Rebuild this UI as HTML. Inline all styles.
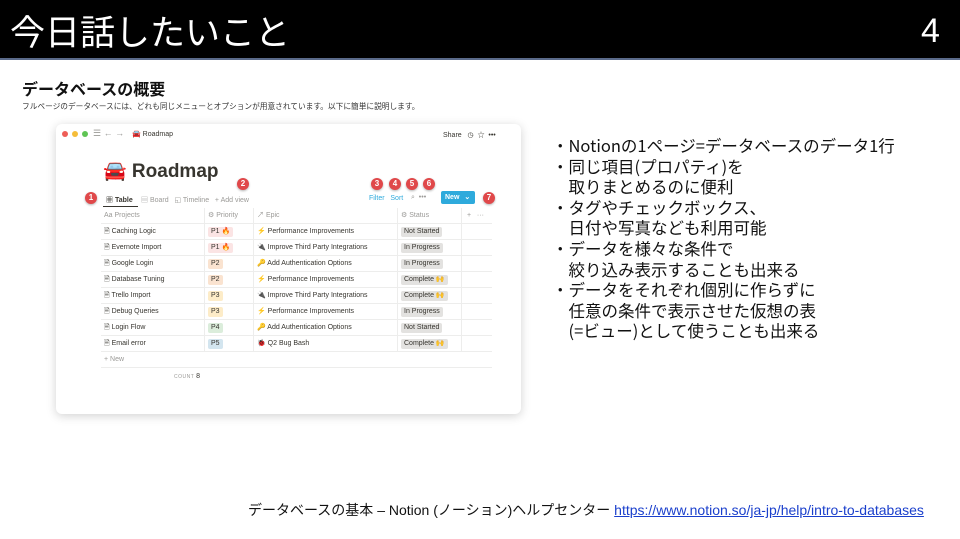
<!DOCTYPE html>
<html><head><meta charset="utf-8"><style>
*{margin:0;padding:0;box-sizing:border-box}
body{width:960px;height:539px;background:#fff;position:relative;overflow:hidden;font-family:"Liberation Sans","Noto Sans CJK JP",sans-serif}
.abs{position:absolute;white-space:nowrap}
.hdr{position:absolute;left:0;top:0;width:960px;height:58px;background:#000}
.hl{position:absolute;left:0;top:58px;width:960px;height:2px;background:#5a6a8a}
.win{position:absolute;left:56px;top:124px;width:465px;height:290px;background:#fff;border-radius:6px;box-shadow:0 2px 10px rgba(0,0,0,.18)}
.t{font-size:7px;color:#37352f}
.g{color:#9b9a97}
.dot{position:absolute;width:6px;height:6px;border-radius:50%}
.num{position:absolute;width:12px;height:12px;border-radius:50%;background:#e0484a;color:#fff;font-size:8px;font-weight:bold;text-align:center;line-height:12px;box-shadow:0 1px 2px rgba(0,0,0,.3)}
.row{position:absolute;left:101px;width:391px;height:16px;border-bottom:1px solid #ededec;font-size:7px;color:#37352f}
.row>span{position:absolute;top:3px;white-space:nowrap;line-height:10px}
.tag{display:inline-block;padding:0 3px;border-radius:2px;line-height:10px}
.vl{position:absolute;top:208px;height:144px;width:1px;background:#ededec}
.bl{font-size:16.5px;color:#111;line-height:20.6px;font-family:"Noto Sans CJK JP","Liberation Sans",sans-serif}
</style></head><body>
<div class="hdr"></div><div class="hl"></div>
<div class="abs" style="left:10px;top:8px;font-size:35px;color:#fff;font-family:'Noto Sans CJK JP',sans-serif;font-weight:400;line-height:46px">今日話したいこと</div>
<div class="abs" style="left:921px;top:9px;font-size:34px;color:#fff;line-height:44px">4</div>

<div class="abs" style="left:22px;top:76px;font-size:16px;font-weight:bold;color:#111">データベースの概要</div>
<div class="abs" style="left:22px;top:101px;font-size:7.7px;color:#333">フルページのデータベースには、どれも同じメニューとオプションが用意されています。以下に簡単に説明します。</div>

<div class="win"></div>
<div class="dot" style="left:62px;top:131px;background:#ee5e57"></div>
<div class="dot" style="left:72px;top:131px;background:#f5bd3a"></div>
<div class="dot" style="left:82px;top:131px;background:#5fc454"></div>
<div class="abs t g" style="left:93px;top:128px;font-size:9px">☰ ← →</div>
<div class="abs t" style="left:132px;top:130px">🚘 Roadmap</div>
<div class="abs t" style="left:443px;top:130px">Share &nbsp; ◷ &nbsp;☆ &nbsp;•••</div>
<div class="abs" style="left:103px;top:159px;font-size:19px;font-weight:bold;color:#37352f">🚘 Roadmap</div>
<div class="num" style="left:85px;top:192px">1</div>
<div class="num" style="left:237px;top:178px">2</div>
<div class="num" style="left:371px;top:178px">3</div>
<div class="num" style="left:389px;top:178px">4</div>
<div class="num" style="left:406px;top:178px">5</div>
<div class="num" style="left:423px;top:178px">6</div>
<div class="num" style="left:483px;top:192px">7</div>
<div class="abs t" style="left:106px;top:195px;font-weight:bold">▦ Table</div>
<div class="abs t g" style="left:141px;top:195px">▤ Board &nbsp; ◱ Timeline &nbsp; + Add view</div>
<div style="position:absolute;left:103px;top:206px;width:35px;height:1px;background:#37352f"></div>
<div class="abs t" style="left:369px;top:195px;color:#2eaadc">Filter &nbsp; Sort</div>
<div class="abs t g" style="left:411px;top:194px">⌕ &nbsp;•••</div>
<div style="position:absolute;left:441px;top:191px;width:34px;height:13px;background:#2eaadc;border-radius:2px;color:#fff;font-size:7px;font-weight:bold;line-height:13px;padding-left:4px">New <span style="margin-left:3px">⌄</span></div>

<div class="row" style="top:208px;color:#9b9a97"><span style="left:3px">Aa Projects</span><span style="left:107px">⚙ Priority</span><span style="left:156px">↗ Epic</span><span style="left:300px">⚙ Status</span><span style="left:366px">+ &nbsp; ···</span></div>
<div class="row" style="top:224px"><span style="left:3px">🗎 Caching Logic</span><span style="left:107px"><i class="tag" style="font-style:normal;background:#fbe4e4">P1 🔥</i></span><span style="left:156px">⚡ Performance Improvements</span><span style="left:300px"><i class="tag" style="font-style:normal;background:#e3e2e0">Not Started</i></span></div>
<div class="row" style="top:240px"><span style="left:3px">🗎 Evernote Import</span><span style="left:107px"><i class="tag" style="font-style:normal;background:#fbe4e4">P1 🔥</i></span><span style="left:156px">🔌 Improve Third Party Integrations</span><span style="left:300px"><i class="tag" style="font-style:normal;background:#e3e2e0">In Progress</i></span></div>
<div class="row" style="top:256px"><span style="left:3px">🗎 Google Login</span><span style="left:107px"><i class="tag" style="font-style:normal;background:#fae3d0">P2</i></span><span style="left:156px">🔑 Add Authentication Options</span><span style="left:300px"><i class="tag" style="font-style:normal;background:#e3e2e0">In Progress</i></span></div>
<div class="row" style="top:272px"><span style="left:3px">🗎 Database Tuning</span><span style="left:107px"><i class="tag" style="font-style:normal;background:#fae3d0">P2</i></span><span style="left:156px">⚡ Performance Improvements</span><span style="left:300px"><i class="tag" style="font-style:normal;background:#e3e2e0">Complete 🙌</i></span></div>
<div class="row" style="top:288px"><span style="left:3px">🗎 Trello Import</span><span style="left:107px"><i class="tag" style="font-style:normal;background:#fdecc8">P3</i></span><span style="left:156px">🔌 Improve Third Party Integrations</span><span style="left:300px"><i class="tag" style="font-style:normal;background:#e3e2e0">Complete 🙌</i></span></div>
<div class="row" style="top:304px"><span style="left:3px">🗎 Debug Queries</span><span style="left:107px"><i class="tag" style="font-style:normal;background:#fdecc8">P3</i></span><span style="left:156px">⚡ Performance Improvements</span><span style="left:300px"><i class="tag" style="font-style:normal;background:#e3e2e0">In Progress</i></span></div>
<div class="row" style="top:320px"><span style="left:3px">🗎 Login Flow</span><span style="left:107px"><i class="tag" style="font-style:normal;background:#dbeddb">P4</i></span><span style="left:156px">🔑 Add Authentication Options</span><span style="left:300px"><i class="tag" style="font-style:normal;background:#e3e2e0">Not Started</i></span></div>
<div class="row" style="top:336px"><span style="left:3px">🗎 Email error</span><span style="left:107px"><i class="tag" style="font-style:normal;background:#d3e5ef">P5</i></span><span style="left:156px">🐞 Q2 Bug Bash</span><span style="left:300px"><i class="tag" style="font-style:normal;background:#e3e2e0">Complete 🙌</i></span></div>
<div class="row" style="top:352px;color:#9b9a97"><span style="left:3px">+ New</span></div>
<div class="vl" style="left:204px"></div><div class="vl" style="left:253px"></div><div class="vl" style="left:397px"></div><div class="vl" style="left:461px"></div>
<div class="abs" style="left:174px;top:373px;font-size:5px;color:#9b9a97;letter-spacing:.5px">COUNT <span style="font-size:7px;color:#37352f">8</span></div>

<div class="abs bl" style="left:552px;top:135px">・Notionの1ページ=データベースのデータ1行<br>・同じ項目(プロパティ)を<br>　取りまとめるのに便利<br>・タグやチェックボックス、<br>　日付や写真なども利用可能<br>・データを様々な条件で<br>　絞り込み表示することも出来る<br>・データをそれぞれ個別に作らずに<br>　任意の条件で表示させた仮想の表<br>　(=ビュー)として使うことも出来る</div>

<div class="abs" style="left:248px;top:500px;font-size:14px;color:#111">データベースの基本 – Notion (ノーション)ヘルプセンター <span style="color:#1a3fcc;text-decoration:underline">https://www.notion.so/ja-jp/help/intro-to-databases</span></div>
</body></html>
